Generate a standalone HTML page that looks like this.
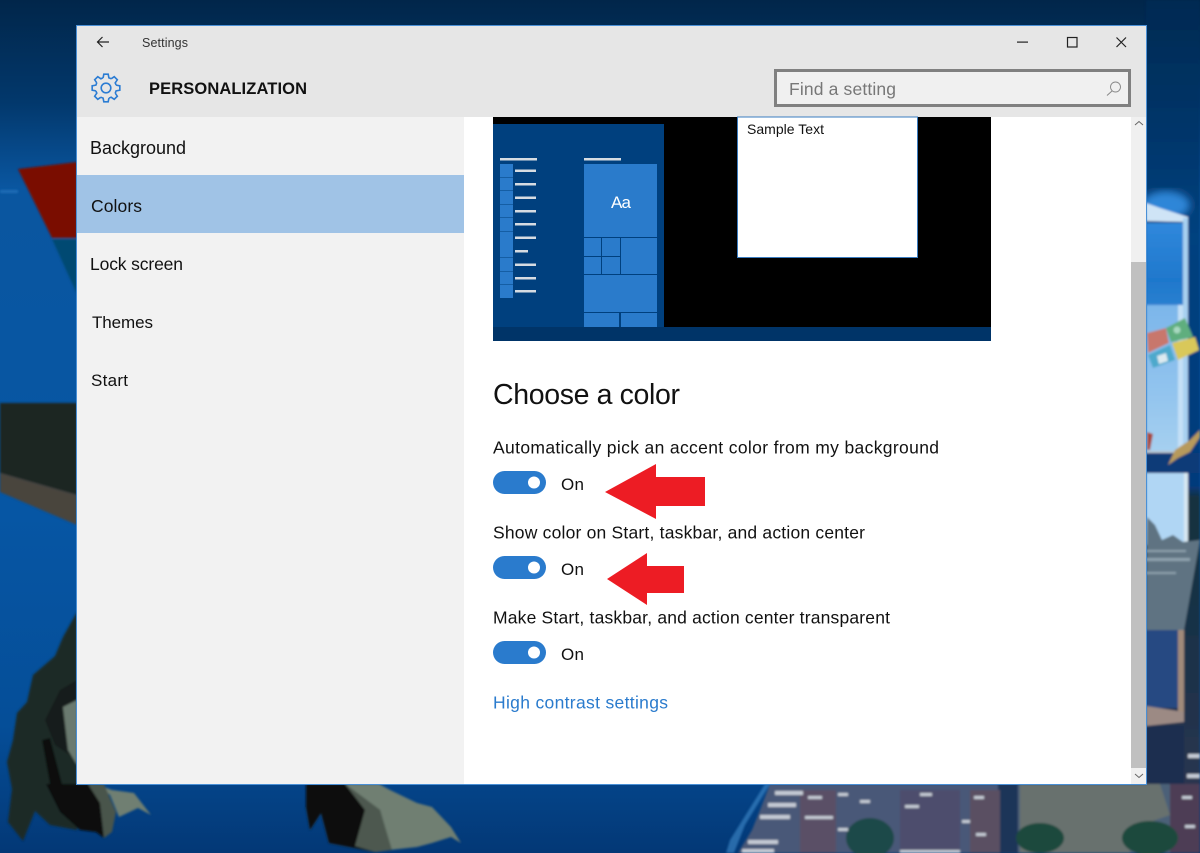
<!DOCTYPE html>
<html><head><meta charset="utf-8"><title>Settings</title>
<style>
html,body{margin:0;padding:0;background:#04387a}
svg{display:block}
text{font-family:"Liberation Sans","DejaVu Sans",sans-serif;fill:#111;font-size:17.5px}
</style></head>
<body>
<svg width="1200" height="853" viewBox="0 0 1200 853" xmlns="http://www.w3.org/2000/svg">
<defs>
<linearGradient id="bg" x1="0" y1="0" x2="0" y2="1">
<stop offset="0" stop-color="#01264a"/><stop offset=".12" stop-color="#02386c"/><stop offset=".22" stop-color="#0a56a0"/><stop offset=".6" stop-color="#0656a4"/><stop offset=".85" stop-color="#054e98"/><stop offset="1" stop-color="#033876"/>
</linearGradient>
<linearGradient id="bgr" x1="0" y1="0" x2="0" y2="1">
<stop offset="0" stop-color="#012a52"/><stop offset=".2" stop-color="#02386f"/><stop offset=".3" stop-color="#04427f"/><stop offset=".62" stop-color="#063a7c"/><stop offset=".635" stop-color="#14303f"/><stop offset=".82" stop-color="#1a3048"/><stop offset="1" stop-color="#2a3650"/>
</linearGradient>
<linearGradient id="pane" x1="0" y1="0" x2="0" y2="1">
<stop offset="0" stop-color="#3088dc"/><stop offset=".7" stop-color="#1f78cc"/><stop offset="1" stop-color="#2a80d0"/>
</linearGradient>
<linearGradient id="pane2" x1="0" y1="0" x2="0" y2="1">
<stop offset="0" stop-color="#7cb6ea"/><stop offset=".6" stop-color="#92c4ee"/><stop offset="1" stop-color="#a6d0f0"/>
</linearGradient>
<filter id="soft"><feGaussianBlur stdDeviation="1"/></filter>
<filter id="glow"><feGaussianBlur stdDeviation="4"/></filter>
<path id="tooth" d="M-2.89-10.09L-2.19-13.83L2.19-13.83L2.89-10.09A10.5 10.5 0 0 1 5.09-9.18" fill="none" stroke="#2b7cd3" stroke-width="1.6"/>
</defs>

<!-- wallpaper -->
<rect width="1200" height="853" fill="url(#bg)"/>
<g filter="url(#soft)">
<polygon points="18,169 77,162 77,238 52,238" fill="#7a0f06"/>
<polygon points="52,239 77,239 77,294" fill="#064a72"/>
<rect x="0" y="190" width="18" height="3" fill="#2a78c0" opacity=".7"/>
<polygon points="0,403 77,403 77,495 0,473" fill="#1b2522"/>
<polygon points="0,473 77,495 77,525 0,492" fill="#4a443e"/>
<polygon points="77,612 63,637 55,656 33,675 27,702 17,713 13,740 7,762 12,789 8,822 23,841 35,811 50,825 77,830" fill="#1d2b26"/>
<polygon points="45,720 60,690 77,680 77,760 55,745" fill="#141c1a"/>
<polygon points="63,707 77,700 77,765 68,750" fill="#6b7a70"/>
<polygon points="42,740 50,738 62,784 50,784" fill="#0a100d"/>
<polygon points="46,784 60,812 80,830 96,832 104,838 100,800 88,784" fill="#0a100d"/>
<polygon points="96,784 112,790 134,793 151,815 138,808 119,817 110,795" fill="#6f7f72"/>
<polygon points="88,784 100,803 104,838 112,832 116,812 104,784" fill="#4a544b"/>
<polygon points="306,784 306,807 310,830 321,813 329,843 375,852 390,850 417,847 432,843 451,837 461,843 451,827 432,807 417,803 390,790 379,784" fill="#6f7f72"/>
<polygon points="306,784 306,807 310,830 321,813 329,843 375,852 390,845 380,810 345,784" fill="#0a100d"/>
<polygon points="345,784 380,810 392,850 375,852 355,846 365,810" fill="#4e584f"/>

<!-- bottom right city -->
<polygon points="770,784 1200,784 1200,853 738,853 752,830 762,805" fill="#4a5878"/>
<rect x="1018" y="784" width="182" height="69" fill="#4c6078"/>
<polygon points="1020,784 1160,784 1170,815 1150,822 1130,830 1130,853 1020,853" fill="#68716e"/>
<rect x="998" y="784" width="20" height="69" fill="#1c3458"/>
<rect x="1170" y="784" width="30" height="69" fill="#4d3d54"/>
<rect x="800" y="790" width="36" height="63" fill="#5a4f66"/>
<rect x="900" y="790" width="60" height="63" fill="#4d4e6d"/>
<rect x="970" y="790" width="30" height="63" fill="#5a4f62"/>
<ellipse cx="870" cy="838" rx="24" ry="20" fill="#1e4a4a"/>
<ellipse cx="1040" cy="838" rx="24" ry="15" fill="#1e4a3e"/>
<ellipse cx="1150" cy="838" rx="28" ry="17" fill="#1e4a3e"/>
<g fill="#c6ccd6">
<rect x="775" y="791" width="28" height="4"/><rect x="768" y="803" width="28" height="4"/><rect x="760" y="815" width="30" height="4"/><rect x="748" y="840" width="30" height="4"/><rect x="742" y="849" width="32" height="4"/>
<rect x="808" y="796" width="14" height="3"/><rect x="838" y="793" width="10" height="3"/><rect x="860" y="800" width="10" height="3"/><rect x="805" y="816" width="28" height="3"/><rect x="838" y="828" width="10" height="3"/><rect x="905" y="805" width="14" height="3"/><rect x="920" y="793" width="12" height="3"/><rect x="974" y="796" width="10" height="3"/><rect x="962" y="820" width="8" height="3"/><rect x="976" y="833" width="10" height="3"/><rect x="900" y="850" width="60" height="3"/><rect x="1182" y="796" width="10" height="3"/><rect x="1185" y="825" width="10" height="3"/>
</g>
<polygon points="765,784 730,840 726,853 734,853 745,825 770,784" fill="#3f8ccc" opacity=".6"/>

<!-- right strip -->
<rect x="1146" y="0" width="54" height="784" fill="url(#bgr)"/>
<ellipse cx="1166" cy="205" rx="24" ry="14" fill="#2f86d8" filter="url(#glow)"/>
<rect x="1146" y="223" width="37" height="82" fill="url(#pane)"/>
<rect x="1146" y="305" width="37" height="146" fill="url(#pane2)"/>
<polygon points="1146,203 1160,208 1188,217 1188,222 1146,221" fill="#cfe4f6"/>
<rect x="1178" y="305" width="6" height="146" fill="#c4e0f6"/>
<rect x="1183" y="218" width="5" height="235" fill="#a8d0f0"/>
<rect x="1146" y="451" width="40" height="2" fill="#b8c4ce"/>
<rect x="1146" y="453" width="54" height="20" fill="#0c3a78"/>
<rect x="1146" y="473" width="38" height="72" fill="#b0d6f4"/>
<rect x="1184" y="473" width="4" height="70" fill="#d8e8f2"/>
<polygon points="1147,517 1155,525 1162,540 1173,535 1183,542 1200,540 1184,630 1146,630" fill="#5f7382"/>
<g fill="#8fa2ae"><rect x="1146" y="550" width="40" height="2"/><rect x="1146" y="558" width="44" height="3"/><rect x="1146" y="572" width="30" height="2"/></g>
<rect x="1146" y="630" width="33" height="78" fill="#254a82"/>
<rect x="1178" y="630" width="6" height="85" fill="#a08a7a"/>
<polygon points="1146,706 1184,712 1184,722 1146,726" fill="#9c8a84"/>
<rect x="1146" y="726" width="38" height="58" fill="#1f2f4f"/>
<rect x="1188" y="754" width="12" height="4" fill="#c6ccd6"/>
<rect x="1187" y="774" width="13" height="4" fill="#c6ccd6"/>
<!-- flag -->
<polygon points="1147,333 1166,328 1169,343 1148,353" fill="#c8776c"/>
<polygon points="1166,328 1185,318 1193,337 1171,342" fill="#5fae7e"/>
<polygon points="1148,355 1170,345 1175,360 1153,368" fill="#4ea9cc"/>
<polygon points="1172,343 1195,337 1199,350 1178,360" fill="#d9c85a"/>
<polygon points="1157,356 1166,353 1168,361 1159,364" fill="#dceaf0"/>
<circle cx="1177" cy="330" r="3.500" fill="#a8d8c0"/>
<polygon points="1168,465 1175,450 1190,440 1200,430 1200,437 1190,452 1178,458" fill="#b79a5c"/>
<polygon points="1147,432 1153,434 1150,450 1147,450" fill="#a8463a"/>
</g>

<!-- window -->
<rect x="76.500" y="25.500" width="1070" height="759" fill="#fff" stroke="#4a90d6"/>
<rect x="77" y="26" width="1069" height="91" fill="#e6e6e6"/>
<rect x="77" y="117" width="387" height="667" fill="#f2f2f2"/>
<rect x="77" y="175" width="387" height="58" fill="#a0c3e6"/>

<!-- title bar icons -->
<path d="M97 42H109M102.500 37L97.500 42L102.500 47" fill="none" stroke="#222" stroke-width="1.2"/>
<text x="142" y="47" textLength="46" style="font-size:12.500px;fill:#333">Settings</text>
<rect x="1017" y="41.500" width="11" height="1.200" fill="#222"/>
<rect x="1067.500" y="37.500" width="9.500" height="9.500" fill="none" stroke="#222" stroke-width="1.200"/>
<path d="M1116.500 37.500L1126 47M1126 37.500L1116.500 47" stroke="#222" stroke-width="1.200" fill="none"/>

<!-- gear -->
<g transform="translate(106 88)">
<use href="#tooth"/><use href="#tooth" transform="rotate(45)"/><use href="#tooth" transform="rotate(90)"/><use href="#tooth" transform="rotate(135)"/><use href="#tooth" transform="rotate(180)"/><use href="#tooth" transform="rotate(225)"/><use href="#tooth" transform="rotate(270)"/><use href="#tooth" transform="rotate(315)"/>
<circle r="4.800" fill="none" stroke="#2b7cd3" stroke-width="1.600"/>
</g>
<text x="149" y="94" textLength="158" style="font-weight:700;font-size:16.500px;fill:#111">PERSONALIZATION</text>

<!-- search -->
<rect x="775.500" y="70.500" width="354" height="35" fill="#f0f0f0" stroke="#808080" stroke-width="3"/>
<text x="789" y="95" textLength="107" style="fill:#777">Find a setting</text>
<circle cx="1115.500" cy="87" r="5" fill="none" stroke="#888" stroke-width=".9"/>
<path d="M1112 91L1107 95.500" stroke="#888" stroke-width="1"/>

<!-- nav -->
<text x="90" y="154" textLength="96" style="font-size:18px">Background</text>
<text x="91" y="212" textLength="51">Colors</text>
<text x="90" y="270" textLength="93" style="font-size:17.500px">Lock screen</text>
<text x="92" y="328" textLength="61" style="font-size:17px">Themes</text>
<text x="91" y="386" textLength="37" style="font-size:17px">Start</text>

<!-- preview -->
<rect x="493" y="117" width="498" height="224" fill="#000"/>
<rect x="493" y="124" width="171" height="203" fill="#00407e"/>
<rect x="493" y="327" width="498" height="14" fill="#003468"/>
<rect x="737.500" y="117" width="180" height="140.500" fill="#fff" stroke="#3a7cc0"/>
<text x="747" y="134" textLength="77" style="font-size:14px;fill:#111">Sample Text</text>
<g fill="#d6dce2">
<rect x="500" y="158" width="37" height="2.500"/><rect x="584" y="158" width="37" height="2.500"/>
<rect x="515" y="169.500" width="21" height="2.500"/><rect x="515" y="183" width="21" height="2.500"/><rect x="515" y="196.500" width="21" height="2.500"/><rect x="515" y="210" width="21" height="2.500"/><rect x="515" y="223" width="21" height="2.500"/><rect x="515" y="236.500" width="21" height="2.500"/><rect x="515" y="250" width="13" height="2.500"/><rect x="515" y="263.500" width="21" height="2.500"/><rect x="515" y="277" width="21" height="2.500"/><rect x="515" y="290" width="21" height="2.500"/>
</g>
<g fill="#2a7bcb">
<rect x="500" y="164" width="13" height="13"/><rect x="500" y="177.500" width="13" height="13"/><rect x="500" y="191" width="13" height="13"/><rect x="500" y="204.500" width="13" height="13"/><rect x="500" y="218" width="13" height="13"/><rect x="500" y="231.500" width="13" height="13"/><rect x="500" y="244.500" width="13" height="13"/><rect x="500" y="258" width="13" height="13"/><rect x="500" y="271.500" width="13" height="13"/><rect x="500" y="285" width="13" height="13"/>
<rect x="584" y="164" width="73" height="73"/>
<rect x="584" y="238" width="17" height="18"/><rect x="602" y="238" width="18" height="18"/><rect x="621" y="238" width="36" height="36"/>
<rect x="584" y="257" width="17" height="17"/><rect x="602" y="257" width="18" height="17"/>
<rect x="584" y="275" width="73" height="37"/>
<rect x="584" y="313" width="35" height="14"/><rect x="621" y="313" width="36" height="14"/>
</g>
<text x="611" y="208" textLength="20" style="fill:#fff;font-size:17px">Aa</text>

<!-- content -->
<text x="493" y="404" textLength="187" style="font-size:28.500px">Choose a color</text>
<text x="493" y="453.500" textLength="446">Automatically pick an accent color from my background</text>
<rect x="493" y="471" width="53" height="23" rx="11.500" fill="#2a7bcd"/><circle cx="534" cy="482.500" r="6" fill="#fff"/>
<text x="561" y="490" textLength="23" style="font-size:17px">On</text>
<text x="493" y="538.500" textLength="372">Show color on Start, taskbar, and action center</text>
<rect x="493" y="556" width="53" height="23" rx="11.500" fill="#2a7bcd"/><circle cx="534" cy="567.500" r="6" fill="#fff"/>
<text x="561" y="575" textLength="23" style="font-size:17px">On</text>
<text x="493" y="623.500" textLength="397">Make Start, taskbar, and action center transparent</text>
<rect x="493" y="641" width="53" height="23" rx="11.500" fill="#2a7bcd"/><circle cx="534" cy="652.500" r="6" fill="#fff"/>
<text x="561" y="660" textLength="23" style="font-size:17px">On</text>
<text x="493" y="708.500" textLength="175" style="fill:#2a7bcd">High contrast settings</text>

<!-- arrows -->
<polygon points="605,492 656,464 656,477 705,477 705,506 656,506 656,519" fill="#ed1c24"/>
<polygon points="607,579 647,553 647,566 684,566 684,593 647,593 647,605" fill="#ed1c24"/>

<!-- scrollbar -->
<rect x="1131" y="117" width="15" height="667" fill="#f0f0f0"/>
<rect x="1131" y="262" width="15" height="506" fill="#c0c0c0"/>
<path d="M1135 125L1139 121.500L1143 125" fill="none" stroke="#666" stroke-width="1"/>
<path d="M1135 774L1139 777.500L1143 774" fill="none" stroke="#666" stroke-width="1"/>
<rect x="1146" y="26" width="1" height="759" fill="#4a90d6"/>
</svg>
</body></html>
